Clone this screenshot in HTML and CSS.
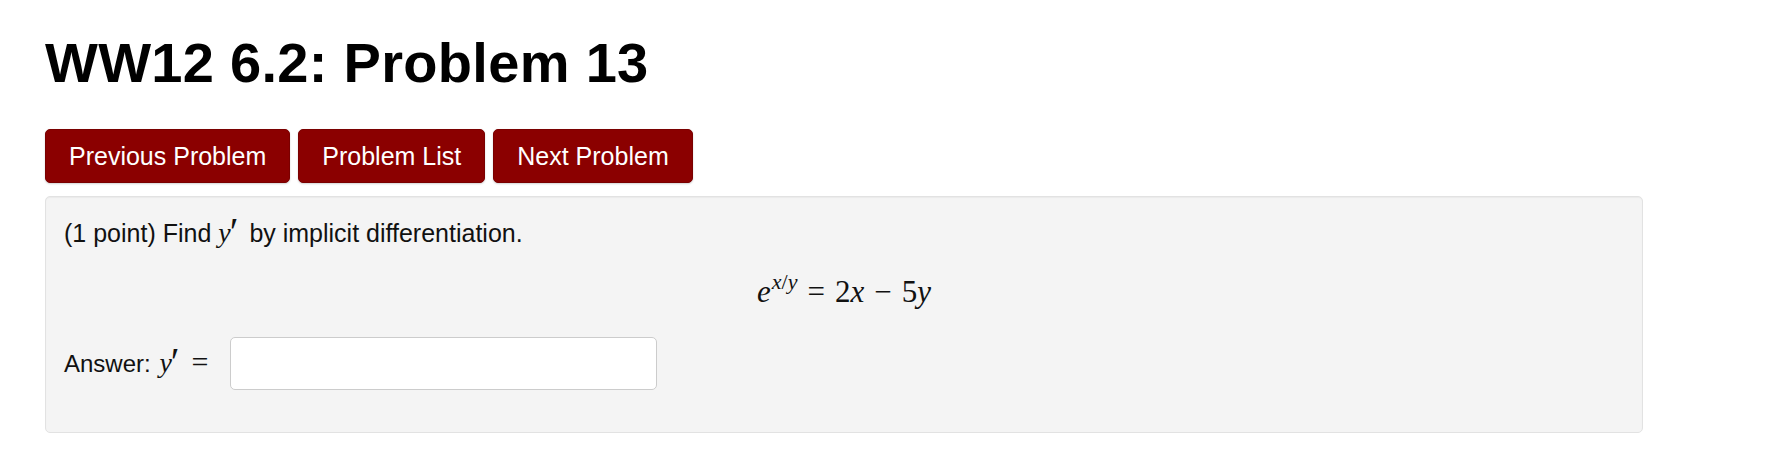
FILE: index.html
```html
<!DOCTYPE html>
<html lang="en">
<head>
<meta charset="utf-8">
<title>WW12 6.2: Problem 13</title>
<link rel="stylesheet" href="styles.css">
</head>
<body>
<main class="page">
  <h1 class="title">WW12 6.2: Problem 13</h1>
  <nav class="nav">
    <a class="btn" href="#">Previous Problem</a>
    <a class="btn" href="#">Problem List</a>
    <a class="btn" href="#">Next Problem</a>
  </nav>
  <section class="well">
    <p class="prompt">(1 point) Find <span class="math"><span class="mi">y</span><span class="prime">′</span></span> by implicit differentiation.</p>
    <div class="equation"><span class="mi">e</span><span class="sup"><span class="mi">x</span>/<span class="mi">y</span></span><span class="mo">=</span>2<span class="mi">x</span><span class="mo">−</span>5<span class="mi">y</span></div>
    <div class="answer-row">
      <span class="label">Answer: <span class="math"><span class="mi">y</span><span class="prime">′</span></span><span class="eq">=</span></span>
      <input class="answer" type="text" aria-label="answer">
    </div>
  </section>
</main>
</body>
</html>
```

FILE: styles.css
```css
html, body {
  margin: 0;
  padding: 0;
  background: #ffffff;
}

body {
  font-family: "Liberation Sans", Arial, Helvetica, sans-serif;
  color: #111111;
}

.page {
  padding: 32px 0 0 45px;
  width: 1598px;
}

.title {
  margin: 0;
  font-size: 56px;
  line-height: 62px;
  font-weight: bold;
  color: #000000;
  letter-spacing: 0.3px;
}

.nav {
  display: flex;
  gap: 8px;
  margin-top: 35px;
}

.btn {
  display: block;
  height: 52px;
  line-height: 52px;
  padding: 0 23px;
  background: #8b0000;
  border: 1px solid #7a0000;
  border-radius: 5px;
  color: #ffffff;
  font-size: 25px;
  text-decoration: none;
  box-shadow: 0 1px 2px rgba(0, 0, 0, 0.18);
}

.well {
  margin-top: 13px;
  background: #f4f4f4;
  border: 1px solid #e2e2e2;
  border-radius: 5px;
  padding: 19px 18px;
  font-size: 24px;
  box-shadow: inset 0 1px 1px rgba(0, 0, 0, 0.04);
}

.prompt {
  margin: 0;
  line-height: 34px;
  font-size: 25px;
}

.math {
  font-family: "Liberation Serif", "Times New Roman", serif;
  font-size: 28px;
  margin: 0 4px 0 0;
}

.mi {
  font-family: "Liberation Serif", "Times New Roman", serif;
  font-style: italic;
}

.prime {
  display: inline-block;
  font-family: "Liberation Serif", "DejaVu Serif", serif;
  font-size: 40px;
  font-weight: 300;
  line-height: 0;
  position: relative;
  top: 3px;
  margin-left: -1px;
}

.equation {
  margin-top: 22px;
  text-align: center;
  font-family: "Liberation Serif", "Times New Roman", serif;
  font-size: 31px;
  line-height: 40px;
  height: 40px;
}

.sup {
  font-size: 22px;
  position: relative;
  top: -13px;
  margin-left: 1px;
}

.mo {
  margin: 0 10px;
}

.answer-row {
  display: flex;
  align-items: flex-start;
  margin-top: 25px;
  margin-bottom: 23px;
}

.label {
  padding-top: 8px;
  line-height: 34px;
  white-space: nowrap;
}

.label .math {
  margin: 0 0 0 2px;
}

.eq {
  font-family: "Liberation Serif", "Times New Roman", serif;
  font-size: 30px;
  margin-left: 12px;
}

.answer {
  margin-left: 22px;
  width: 427px;
  height: 53px;
  box-sizing: border-box;
  border: 1px solid #cccccc;
  border-radius: 5px;
  background: #ffffff;
  font-size: 24px;
  padding: 4px 10px;
  outline: none;
}
```
